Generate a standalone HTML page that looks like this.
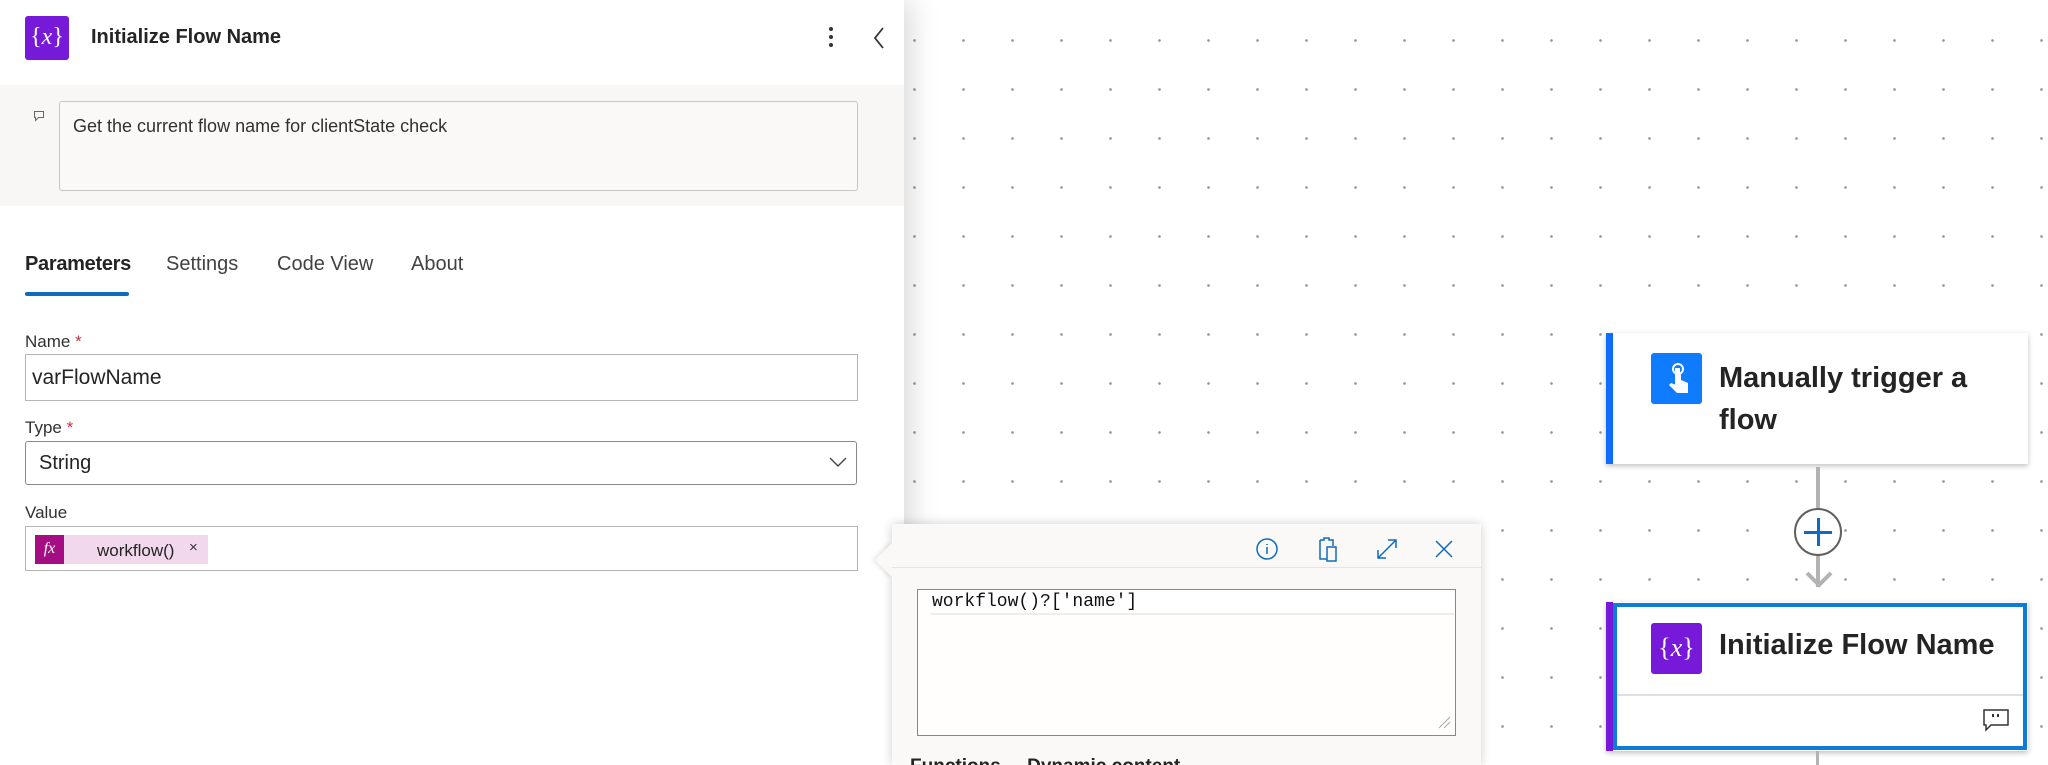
<!DOCTYPE html>
<html style="width:2048px;height:765px;overflow:hidden"><head><meta charset="utf-8"><style>
*{box-sizing:border-box;margin:0;padding:0}
body{width:2048px;height:765px;overflow:hidden;position:relative;font-family:"Liberation Sans",sans-serif;color:#242424;background:#fff;
background-image:radial-gradient(circle,#9a9a9a 1.1px,transparent 1.6px);background-size:49px 49px;background-position:8px 16px}
.abs{position:absolute}
#panel{left:0;top:0;width:904px;height:765px;background:#fff;box-shadow:6px 0 28px rgba(0,0,0,.16)}
.card{background:#fff;box-shadow:0 2px 5px rgba(0,0,0,.25)}
.lbl{font-size:17px;color:#323130}
.lbl b{color:#c4314b;font-weight:normal}
.inp{border:1px solid #b5b5b5;background:#fff}
</style></head><body>
<div id="panel" class="abs">
  <div class="abs" style="left:25px;top:16px;width:44px;height:44px;background:#7719d8;border-radius:3px;color:#fff;font-family:'Liberation Serif',serif;font-size:24px;text-align:center;line-height:42px">{<i>x</i>}</div>
  <div class="abs" style="left:91px;top:26px;font-size:20px;font-weight:bold;color:#242424">Initialize Flow Name</div>
  <div class="abs" style="left:829px;top:27px;width:5px">
    <div style="width:4px;height:4px;border-radius:2px;background:#333;margin-bottom:4px"></div>
    <div style="width:4px;height:4px;border-radius:2px;background:#333;margin-bottom:4px"></div>
    <div style="width:4px;height:4px;border-radius:2px;background:#333"></div></div>
  <svg class="abs" style="left:872px;top:26px" width="14" height="24"><path d="M11 2 L3 12 L11 22" stroke="#333" stroke-width="1.8" fill="none"/></svg>
  <div class="abs" style="left:0;top:85px;width:904px;height:121px;background:#f8f7f6"></div>
  <svg class="abs" style="left:33px;top:110px" width="12" height="12"><path d="M1.5 1.5h9v6h-5l-3 3v-3h-1z" stroke="#666" fill="none"/></svg>
  <div class="abs" style="left:59px;top:101px;width:799px;height:90px;border:1px solid #c8c6c4;border-radius:3px;background:#faf9f8;padding:14px 13px;font-size:18px;color:#323130">Get the current flow name for clientState check</div>
  <div class="abs" style="left:25px;top:253px;font-size:20px;color:#242424;font-weight:bold;letter-spacing:-.3px">Parameters</div>
  <div class="abs" style="left:166px;top:253px;font-size:20px;color:#424242">Settings</div>
  <div class="abs" style="left:277px;top:253px;font-size:20px;color:#424242">Code View</div>
  <div class="abs" style="left:411px;top:253px;font-size:20px;color:#424242">About</div>
  <div class="abs" style="left:25px;top:292px;width:104px;height:4px;border-radius:2px;background:#0f6cbd"></div>
  <div class="abs lbl" style="left:25px;top:332px">Name <b>*</b></div>
  <div class="abs inp" style="left:25px;top:354px;width:833px;height:47px;padding:11px 6px;font-size:21px">varFlowName</div>
  <div class="abs lbl" style="left:25px;top:418px">Type <b>*</b></div>
  <div class="abs inp" style="left:25px;top:441px;width:832px;height:44px;border-color:#8a8886;border-radius:3px;padding:10px 13px;font-size:20px">String</div>
  <svg class="abs" style="left:829px;top:456px" width="18" height="12"><path d="M1 2 L9 10 L17 2" stroke="#444" stroke-width="1.4" fill="none"/></svg>
  <div class="abs lbl" style="left:25px;top:503px">Value</div>
  <div class="abs inp" style="left:25px;top:526px;width:833px;height:45px"></div>
  <div class="abs" style="left:35px;top:535px;width:173px;height:29px;background:#f2d8ec"></div>
  <div class="abs" style="left:35px;top:535px;width:29px;height:29px;background:#a50e82;color:#fff;font-family:'Liberation Serif',serif;font-style:italic;font-size:16px;text-align:center;line-height:28px">fx</div>
  <div class="abs" style="left:97px;top:541px;font-size:17px;color:#242424">workflow()</div>
  <div class="abs" style="left:189px;top:539px;font-size:15px;color:#333">×</div>
</div>
<!-- popup -->
<div class="abs" style="left:892px;top:524px;width:589px;height:241px;background:#faf9f8;box-shadow:0 0 10px rgba(0,0,0,.2)"></div>
<div class="abs" style="left:880px;top:548px;width:24px;height:24px;background:#faf9f8;transform:rotate(45deg);box-shadow:-2px 2px 4px rgba(0,0,0,.1)"></div>
<div class="abs" style="left:892px;top:540px;width:20px;height:40px;background:#faf9f8"></div>
<div class="abs" style="left:892px;top:567px;width:589px;height:1px;background:#e6e4e2"></div>
<svg class="abs" style="left:1255px;top:537px" width="24" height="24"><circle cx="12" cy="12" r="10" stroke="#0f6cbd" stroke-width="1.5" fill="none"/><path d="M12 10v7M12 7v1" stroke="#0f6cbd" stroke-width="1.5"/></svg>
<svg class="abs" style="left:1316px;top:535px" width="24" height="28"><path d="M4 5h4v-2h5v2h4v6M4 5v19h7" stroke="#0f6cbd" stroke-width="1.5" fill="none"/><rect x="11" y="12" width="9" height="14" stroke="#0f6cbd" stroke-width="1.5" fill="none"/></svg>
<svg class="abs" style="left:1375px;top:537px" width="24" height="24"><path d="M3 21L21 3M13 3h8v8M3 13v8h8" stroke="#0f6cbd" stroke-width="1.5" fill="none"/></svg>
<svg class="abs" style="left:1434px;top:539px" width="20" height="20"><path d="M2 2L18 18M18 2L2 18" stroke="#0f6cbd" stroke-width="1.5"/></svg>
<div class="abs" style="left:917px;top:589px;width:539px;height:147px;border:1.5px solid #8a8886;background:#fffefd"></div>
<div class="abs" style="left:931px;top:591px;width:523px;height:24px;background:#fff;border-bottom:2px solid #eeedeb"></div>
<div class="abs" style="left:932px;top:592px;font-family:'Liberation Mono',monospace;font-size:18px;color:#111">workflow()?['name']</div>
<svg class="abs" style="left:1437px;top:715px" width="14" height="14"><path d="M2 13L13 2M7 13L13 7" stroke="#aaa"/></svg>
<div class="abs" style="left:910px;top:756px;font-size:19px;color:#242424;font-weight:bold">Functions&nbsp;&nbsp;&nbsp;&nbsp;&nbsp;Dynamic content</div>
<!-- flow cards -->
<div class="abs card" style="left:1606px;top:333px;width:422px;height:131px;border-left:7px solid #0f6cfe"></div>
<div class="abs" style="left:1651px;top:353px;width:51px;height:51px;background:#0f7bff;border-radius:3px"></div>
<svg class="abs" style="left:1651px;top:353px" width="51" height="51"><circle cx="27" cy="16" r="5" stroke="#fff" stroke-width="2" fill="none"/><path d="M25 16v16l-5-2-2 2 8 8h11v-10l-7-3v-5" fill="#fff"/><rect x="24" y="15" width="5" height="18" fill="#fff"/></svg>
<div class="abs" style="left:1719px;top:357px;font-size:29px;font-weight:bold;color:#242424;line-height:42px;width:280px">Manually trigger a flow</div>
<div class="abs" style="left:1816px;top:467px;width:4px;height:120px;background:#b3b3b3"></div>
<svg class="abs" style="left:1804px;top:570px" width="30" height="20"><path d="M3 3L15 15L27 3" stroke="#b3b3b3" stroke-width="4" fill="none"/></svg>
<div class="abs" style="left:1794px;top:508px;width:48px;height:48px;border-radius:50%;border:2px solid #616161;background:#fff"></div>
<div class="abs" style="left:1804px;top:531px;width:28px;height:3px;background:#0f6cbd"></div>
<div class="abs" style="left:1817px;top:518px;width:3px;height:28px;background:#0f6cbd"></div>
<div class="abs card" style="left:1606px;top:602px;width:422px;height:149px;border-left:7px solid #7719d8"></div>
<div class="abs" style="left:1613px;top:603px;width:414px;height:147px;border:4px solid #0f7bd8"></div>
<div class="abs" style="left:1617px;top:694px;width:406px;height:2px;background:#e1dfdd"></div>
<div class="abs" style="left:1651px;top:623px;width:51px;height:51px;background:#7719d8;border-radius:3px;color:#fff;font-family:'Liberation Serif',serif;font-size:26px;text-align:center;line-height:49px">{<i>x</i>}</div>
<div class="abs" style="left:1719px;top:629px;font-size:29px;font-weight:bold;color:#242424">Initialize Flow Name</div>
<svg class="abs" style="left:1983px;top:709px" width="26" height="24"><path d="M1 1h24v15H8l-5 5v-5H1z" stroke="#333" stroke-width="1.5" fill="#fff"/><path d="M10 5v3M15 5v3" stroke="#333" stroke-width="2"/></svg>
<div class="abs" style="left:1816px;top:751px;width:3px;height:14px;background:#b3b3b3"></div>
</body></html>
